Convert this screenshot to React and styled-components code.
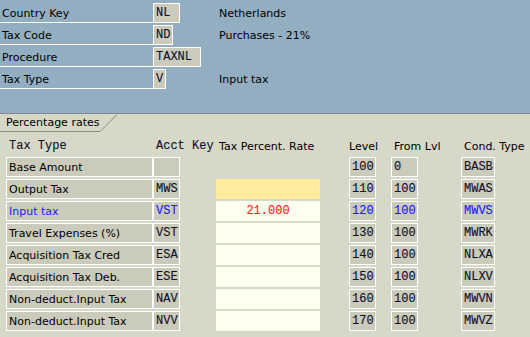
import styled, { createGlobalStyle } from 'styled-components';

const GlobalStyle = createGlobalStyle`
  html, body {
    margin: 0;
    padding: 0;
    background: #d8d8c8;
  }
  * {
    box-sizing: border-box;
  }
`;

const SANS = `"DejaVu Sans", Verdana, sans-serif`;
const MONO = `"Liberation Mono", "Courier New", monospace`;
const BLUE = '#1a1aff';
const COLS = '147px 27px 36px 104px 29px 27px 15px 27px 43px 34px';

const headerFields = [
  { label: 'Country Key', value: 'NL', width: 27, text: 'Netherlands' },
  { label: 'Tax Code', value: 'ND', width: 20, text: 'Purchases - 21%' },
  { label: 'Procedure', value: 'TAXNL', width: 48, text: '' },
  { label: 'Tax Type', value: 'V', width: 13, text: 'Input tax' },
];

const rates = [
  { name: 'Base Amount', key: '', level: '100', from: '0', cond: 'BASB', rate: null },
  { name: 'Output Tax', key: 'MWS', level: '110', from: '100', cond: 'MWAS', rate: '', focus: true },
  { name: 'Input tax', key: 'VST', level: '120', from: '100', cond: 'MWVS', rate: '21.000', active: true },
  { name: 'Travel Expenses (%)', key: 'VST', level: '130', from: '100', cond: 'MWRK', rate: '' },
  { name: 'Acquisition Tax Cred', key: 'ESA', level: '140', from: '100', cond: 'NLXA', rate: '' },
  { name: 'Acquisition Tax Deb.', key: 'ESE', level: '150', from: '100', cond: 'NLXV', rate: '' },
  { name: 'Non-deduct.Input Tax', key: 'NAV', level: '160', from: '100', cond: 'MWVN', rate: '' },
  { name: 'Non-deduct.Input Tax', key: 'NVV', level: '170', from: '100', cond: 'MWVZ', rate: '' },
];

const App = () => {
  return (
    <Page>
      <GlobalStyle />
      <HeaderPanel>
        {headerFields.map((f) => (
          <HeaderRow key={f.label}>
            <HeaderLabel>{f.label}</HeaderLabel>
            <HeaderField $width={f.width}>{f.value}</HeaderField>
            <HeaderText>{f.text}</HeaderText>
          </HeaderRow>
        ))}
      </HeaderPanel>

      <TabStrip>
        <Tab>Percentage rates</Tab>
        <TabEdge width="17" height="18" viewBox="0 0 17 18">
          <line x1="0" y1="17.5" x2="17" y2="0.5" stroke="#8a8a80" strokeWidth="1" />
        </TabEdge>
      </TabStrip>

      <TabBody>
        <ColumnHeads>
          <MonoHead $col={1}>Tax Type</MonoHead>
          <MonoHead $col={2}>Acct Key</MonoHead>
          <SansHead $col="4 / span 2">Tax Percent. Rate</SansHead>
          <SansHead $col={6} $right>Level</SansHead>
          <SansHead $col="8 / span 2">From Lvl</SansHead>
          <SansHead $col="10 / span 2">Cond. Type</SansHead>
        </ColumnHeads>

        <Rows>
          {rates.map((r, i) => (
            <RateRow key={i}>
              <NameCell $active={r.active}>{r.name}</NameCell>
              <CodeCell $col={2} $active={r.active}>{r.key}</CodeCell>
              {r.rate !== null && (
                <RateCell $focus={r.focus}>{r.rate}</RateCell>
              )}
              <CodeCell $col={6} $active={r.active}>{r.level}</CodeCell>
              <CodeCell $col={8} $active={r.active}>{r.from}</CodeCell>
              <CodeCell $col={10} $active={r.active}>{r.cond}</CodeCell>
            </RateRow>
          ))}
        </Rows>
      </TabBody>
    </Page>
  );
};

export default App;

const Page = styled.div`
  width: 530px;
  height: 337px;
  overflow: hidden;
  display: flex;
  flex-direction: column;
  background: #d8d8c8;
  color: #000;
  font-family: ${SANS};
  font-size: 11px;
`;

const HeaderPanel = styled.div`
  height: 114px;
  padding-top: 1px;
  background: #93aec1;
  border-bottom: 1px solid #7d8890;
`;

const HeaderRow = styled.div`
  display: grid;
  grid-template-columns: 153px 66px 1fr;
  height: 22px;
  align-items: start;
`;

const HeaderLabel = styled.div`
  height: 22px;
  padding: 6px 0 0 2px;
  line-height: 14px;
  border-bottom: 1px solid #fff;
`;

const HeaderField = styled.div`
  width: ${(p) => p.$width}px;
  height: 20px;
  margin-top: 2px;
  padding-left: 2px;
  border: 1px solid #fff;
  background: #cccbbb;
  font-family: ${MONO};
  font-size: 12px;
  line-height: 19px;
  color: #10102a;
  -webkit-text-stroke: 0.12px currentColor;
  white-space: nowrap;
`;

const HeaderText = styled.div`
  padding-top: 6px;
  line-height: 14px;
`;

const TabStrip = styled.div`
  display: flex;
  height: 18px;
`;

const Tab = styled.div`
  width: 100px;
  height: 18px;
  padding: 2px 0 0 6px;
  line-height: 14px;
  border-bottom: 1px solid #8a8a80;
  white-space: nowrap;
`;

const TabEdge = styled.svg`
  display: block;
`;

const TabBody = styled.div`
  padding: 4px 0 0 6px;
`;

const ColumnHeads = styled.div`
  display: grid;
  grid-template-columns: ${COLS};
  height: 20px;
  align-items: center;
  margin-bottom: 1px;
`;

const MonoHead = styled.div`
  grid-column: ${(p) => p.$col};
  padding-left: 3px;
  font-family: ${MONO};
  font-size: 12px;
  color: #10102a;
  -webkit-text-stroke: 0.12px currentColor;
  white-space: nowrap;
`;

const SansHead = styled.div`
  grid-column: ${(p) => p.$col};
  padding: ${(p) => (p.$right ? '0 2px 0 0' : '0 0 0 3px')};
  text-align: ${(p) => (p.$right ? 'right' : 'left')};
  white-space: nowrap;
`;

const Rows = styled.div`
  display: flex;
  flex-direction: column;
  gap: 2px;
`;

const RateRow = styled.div`
  display: grid;
  grid-template-columns: ${COLS};
  height: 20px;
`;

const Cell = styled.div`
  height: 20px;
  border: 1px solid #fff;
  background: #cbcbbb;
  color: ${(p) => (p.$active ? BLUE : '#000')};
  white-space: nowrap;
  overflow: hidden;
`;

const NameCell = styled(Cell)`
  grid-column: 1;
  padding-left: 2px;
  line-height: 19px;
`;

const CodeCell = styled(Cell)`
  grid-column: ${(p) => p.$col};
  padding-left: 2px;
  font-family: ${MONO};
  font-size: 12px;
  line-height: 19px;
  color: ${(p) => (p.$active ? BLUE : '#10102a')};
  -webkit-text-stroke: 0.12px currentColor;
`;

const RateCell = styled.div`
  grid-column: 4;
  height: 20px;
  background: ${(p) => (p.$focus ? '#ffec9c' : '#fffff0')};
  color: #ff1a1a;
  font-family: ${MONO};
  font-size: 12px;
  line-height: 20px;
  text-align: center;
  -webkit-text-stroke: 0.12px currentColor;
`;
